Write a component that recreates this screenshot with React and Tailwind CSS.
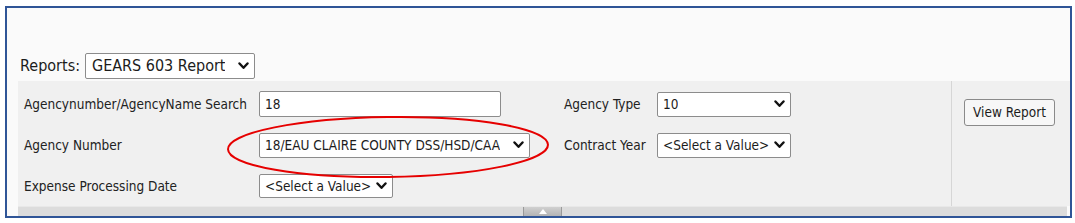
import React from 'react';

const font = { fontFamily: '"DejaVu Sans Condensed", "DejaVu Sans", sans-serif' };

function Chevron() {
  return (
    <svg width="11" height="8" viewBox="0 0 11 8" className="shrink-0">
      <path d="M1.5 1.5 L5.5 5.8 L9.5 1.5" fill="none" stroke="#111" strokeWidth="2.4" strokeLinecap="round" strokeLinejoin="round" />
    </svg>
  );
}

function FakeSelect({ value, className = '' }) {
  return (
    <div className={`flex items-center justify-between bg-white border border-[#8c8c8c] rounded-[2px] pl-[5px] pr-[5px] text-[#1c1c1c] ${className}`}>
      <span className="whitespace-nowrap overflow-hidden">{value}</span>
      <Chevron />
    </div>
  );
}

function Label({ children }) {
  return <div className="text-[13.5px] text-[#222] whitespace-nowrap pl-[6px]">{children}</div>;
}

export default function App() {
  return (
    <div className="w-[1075px] h-[223px] bg-white pt-[6px] pl-[5px] font-stretch-condensed" style={font}>
      <div className="relative w-[1067px] h-[212px] border-2 border-[#2f5597] bg-[#fafafa] flex flex-col">
        {/* reports row */}
        <div className="h-[73px] flex items-end pb-[2px] pl-[13px] gap-[5px]">
          <span className="text-[16px] text-[#1c1c1c] leading-[26px]">Reports:</span>
          <FakeSelect value="GEARS 603 Report" className="w-[170px] h-[26px] text-[16px] pl-[6px]" />
        </div>

        {/* parameters panel */}
        <div className="ml-[11px] h-[125px] bg-[#f0f0f0] flex">
          <div className="w-[933px] pt-[10px] grid grid-cols-[241px_305px_93px_1fr] auto-rows-[26px] gap-y-[15px] items-center text-[13.5px]">
            <Label>Agencynumber/AgencyName Search</Label>
            <div className="w-[242px] h-[26px] bg-white border border-[#8c8c8c] rounded-[2px] pl-[5px] flex items-center text-[#1c1c1c]">18</div>
            <div className="text-[#222] whitespace-nowrap">Agency Type</div>
            <FakeSelect value="10" className="w-[134px] h-[25px]" />

            <Label>Agency Number</Label>
            <FakeSelect value="18/EAU CLAIRE COUNTY DSS/HSD/CAA" className="w-[271px] h-[25px]" />
            <div className="text-[#222] whitespace-nowrap">Contract Year</div>
            <FakeSelect value="<Select a Value>" className="w-[134px] h-[25px]" />

            <Label>Expense Processing Date</Label>
            <FakeSelect value="<Select a Value>" className="w-[134px] h-[24px]" />
          </div>
          <div className="w-px bg-[#d6d6d6]" />
          <div className="flex-1 pl-[12px] pt-[18px]">
            <button className="w-[91px] h-[27px] bg-[#f7f7f7] border border-[#8a8a8a] rounded-[3px] text-[13.5px] text-[#1c1c1c]" style={font}>
              View Report
            </button>
          </div>
        </div>

        {/* collapse bar */}
        <div className="ml-[11px] mr-[3px] h-[10px] bg-[#dcdcdc] border-t border-[#e8e8e8] flex justify-center">
          <div className="w-[39px] h-full bg-gradient-to-b from-[#d0d0d0] to-[#b4b4b4] border-x border-[#9a9a9a] flex items-center justify-center">
            <svg width="8" height="5" viewBox="0 0 8 5">
              <path d="M0 5 L4 0 L8 5 Z" fill="#fff" />
            </svg>
          </div>
        </div>

        {/* red highlight ellipse */}
        <svg className="absolute left-[218px] top-[106px] pointer-events-none" width="326" height="66" viewBox="0 0 326 66">
          <ellipse cx="163" cy="33" rx="160" ry="30" fill="none" stroke="#e60000" strokeWidth="2" transform="rotate(-0.8 163 33)" />
        </svg>
      </div>
    </div>
  );
}
